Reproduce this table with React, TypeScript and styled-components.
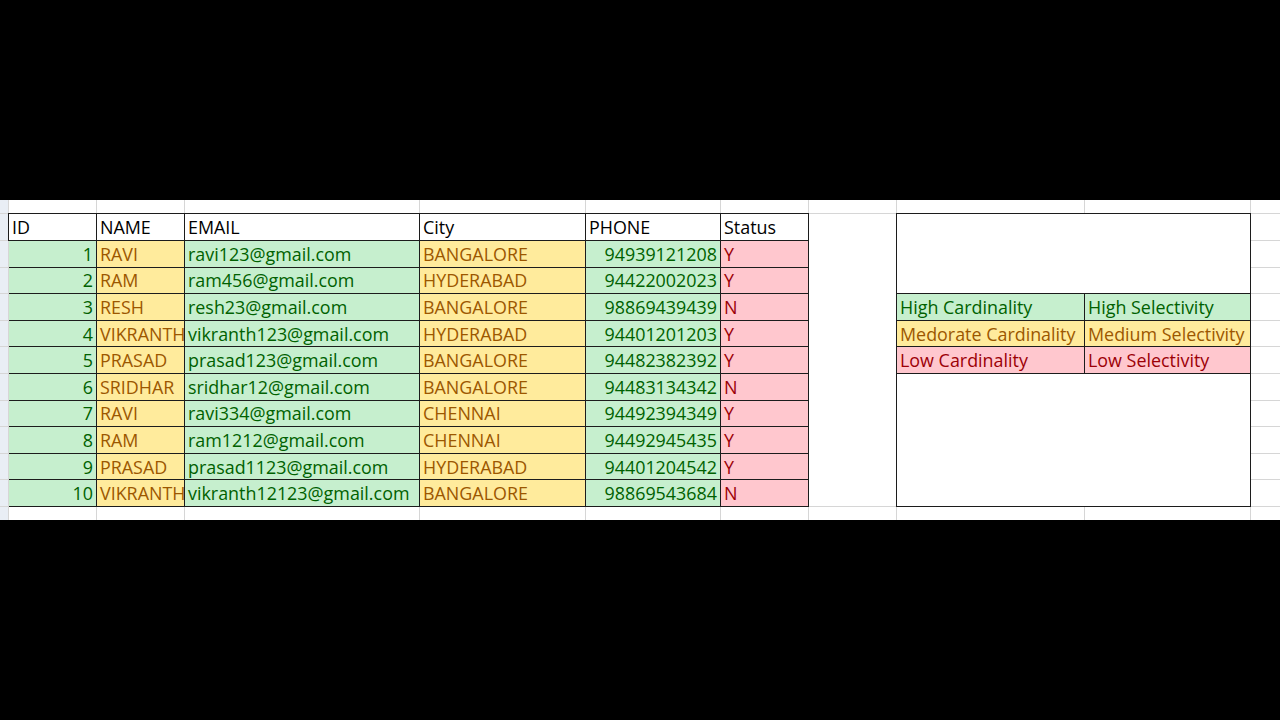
import * as React from "react";
import styled, { createGlobalStyle, css } from "styled-components";

const GlobalStyle = createGlobalStyle`
  html, body {
    margin: 0;
    padding: 0;
    background: #000;
  }
`;

type Tone = "plain" | "good" | "neutral" | "bad";
type Edge = "none" | "full" | "noLeft";

const tones: Record<Tone, { bg: string; fg: string }> = {
  plain: { bg: "#ffffff", fg: "#000000" },
  good: { bg: "#c6efce", fg: "#006100" },
  neutral: { bg: "#ffeb9c", fg: "#9c5700" },
  bad: { bg: "#ffc7ce", fg: "#9c0006" },
};

const line = "#1c1c1c";

const edges: Record<Edge, ReturnType<typeof css> | string> = {
  none: "",
  full: css`
    box-shadow: 0 0 0 1px ${line};
  `,
  noLeft: css`
    box-shadow: 1px 0 0 0 ${line}, 0 1px 0 0 ${line}, 0 -1px 0 0 ${line};
  `,
};

const Frame = styled.div`
  height: 720px;
  display: flex;
  flex-direction: column;
  justify-content: center;
  background: #000;
`;

const Sheet = styled.div`
  display: grid;
  grid-template-columns: 8px 87px 87px 234px 165px 134px 87px 87px 187px 165px 1fr;
  grid-template-rows: 13px 26px repeat(10, 25.6px) 1fr;
  gap: 1px;
  height: 320px;
  overflow: hidden;
  background: #d6d6d6;
  font-family: "Open Sans", Lato, sans-serif;
  font-size: 17.9px;
`;

const RowHead = styled.div`
  background: #e9eef5;
`;

const Blank = styled.div`
  background: #ffffff;
`;

const Cell = styled.div<{ $tone?: Tone; $right?: boolean; $edge?: Edge }>`
  display: flex;
  align-items: center;
  justify-content: ${(p) => (p.$right ? "flex-end" : "flex-start")};
  padding: 0 3px;
  white-space: nowrap;
  overflow: hidden;
  background: ${(p) => tones[p.$tone ?? "plain"].bg};
  color: ${(p) => tones[p.$tone ?? "plain"].fg};
  ${(p) => edges[p.$edge ?? "full"]}
`;

const SpacerColumn = styled.div`
  grid-column: 8 / 9;
  grid-row: 2 / 13;
  background: #ffffff;
`;

const LegendPanel = styled.div<{ $rows: string }>`
  grid-column: 9 / 11;
  grid-row: ${(p) => p.$rows};
  background: #ffffff;
  box-shadow: 0 0 0 1px ${line};
`;

type Person = [number, string, string, string, string, "Y" | "N"];

const people: Person[] = [
  [1, "RAVI", "ravi123@gmail.com", "BANGALORE", "94939121208", "Y"],
  [2, "RAM", "ram456@gmail.com", "HYDERABAD", "94422002023", "Y"],
  [3, "RESH", "resh23@gmail.com", "BANGALORE", "98869439439", "N"],
  [4, "VIKRANTH", "vikranth123@gmail.com", "HYDERABAD", "94401201203", "Y"],
  [5, "PRASAD", "prasad123@gmail.com", "BANGALORE", "94482382392", "Y"],
  [6, "SRIDHAR", "sridhar12@gmail.com", "BANGALORE", "94483134342", "N"],
  [7, "RAVI", "ravi334@gmail.com", "CHENNAI", "94492394349", "Y"],
  [8, "RAM", "ram1212@gmail.com", "CHENNAI", "94492945435", "Y"],
  [9, "PRASAD", "prasad1123@gmail.com", "HYDERABAD", "94401204542", "Y"],
  [10, "VIKRANTH", "vikranth12123@gmail.com", "BANGALORE", "98869543684", "N"],
];

// legend sits beside data rows 3..5
const legend: Record<number, [Tone, string, string]> = {
  2: ["good", "High Cardinality", "High Selectivity"],
  3: ["neutral", "Medorate Cardinality", "Medium Selectivity"],
  4: ["bad", "Low Cardinality", "Low Selectivity"],
};

const headers = ["ID", "NAME", "EMAIL", "City", "PHONE", "Status"];

const EdgeRow = ({ tag }: { tag: string }) => (
  <>
    <RowHead />
    {Array.from({ length: 10 }).map((_, i) => (
      <Blank key={`${tag}-${i}`} />
    ))}
  </>
);

const App = () => {
  return (
    <>
      <GlobalStyle />
      <Frame>
        <Sheet>
          <SpacerColumn />
          <LegendPanel $rows="2 / 5" />
          <LegendPanel $rows="8 / 13" />

          <EdgeRow tag="top" />

          <RowHead />
          {headers.map((h) => (
            <Cell key={h}>{h}</Cell>
          ))}
          <Blank />

          {people.map(([id, name, email, city, phone, status], i) => (
            <React.Fragment key={id}>
              <RowHead />
              <Cell $tone="good" $right $edge="noLeft">
                {id}
              </Cell>
              <Cell $tone="neutral">{name}</Cell>
              <Cell $tone="good">{email}</Cell>
              <Cell $tone="neutral">{city}</Cell>
              <Cell $tone="good" $right>
                {phone}
              </Cell>
              <Cell $tone="bad">{status}</Cell>
              {legend[i] && (
                <>
                  <Cell $tone={legend[i][0]}>{legend[i][1]}</Cell>
                  <Cell $tone={legend[i][0]}>{legend[i][2]}</Cell>
                </>
              )}
              <Blank />
            </React.Fragment>
          ))}

          <EdgeRow tag="bottom" />
        </Sheet>
      </Frame>
    </>
  );
};

export default App;
